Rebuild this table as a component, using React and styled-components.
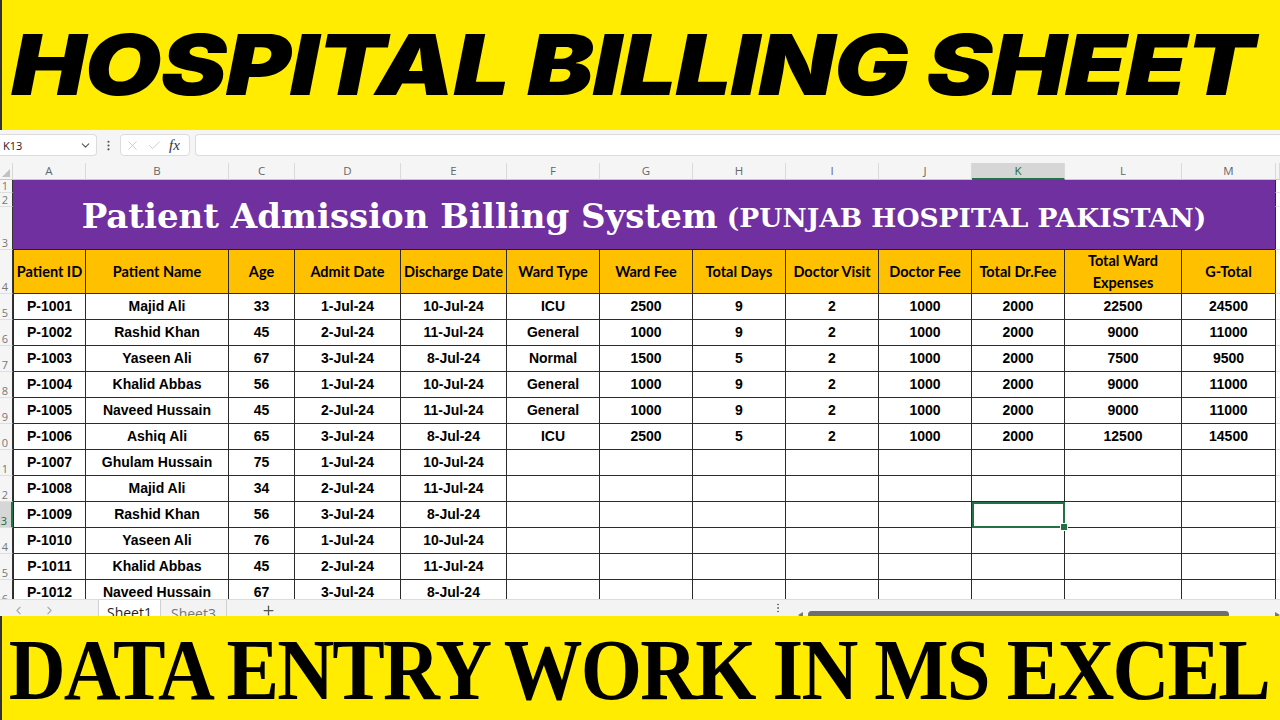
import React from "react"
import styled, { createGlobalStyle, css } from "styled-components"
import { ChevronDown, X, Check, EllipsisVertical, ChevronLeft, ChevronRight, Plus } from "lucide-react"

const GlobalStyle = createGlobalStyle`
  html, body { margin: 0; padding: 0; }
  body {
    width: 1280px; height: 720px; overflow: hidden;
    font-family: "Liberation Sans", Arial, sans-serif;
    background: #fff;
  }
`

const YELLOW = "#ffec00"
const GRID_COLS = "13px 73px 143px 66px 106px 106px repeat(6, 93px) 117px 94px 1fr"

const Page = styled.div`
  display: flex;
  flex-direction: column;
  width: 1280px;
  height: 720px;
`

const Banner = styled.div`
  background: ${YELLOW};
  height: ${p => p.$h}px;
  display: flex;
  align-items: center;
  justify-content: center;
  color: #000;
  overflow: hidden;
  white-space: nowrap;
  border-left: 2px solid #333;
`

const TopTitle = styled.h1`
  margin: 0 18px 0 0;
  font-family: Inter, "Liberation Sans", sans-serif;
  font-weight: 900;
  font-style: italic;
  font-size: 84px;
  letter-spacing: -1px;
  line-height: 1;
  transform: scaleX(1.185);
`

const BottomTitle = styled.h2`
  margin: 0 4px 0 0;
  font-family: "Liberation Serif", "Times New Roman", serif;
  font-weight: 700;
  font-size: 86px;
  letter-spacing: -2px;
  line-height: 1;
  transform: scaleX(0.916);
  padding-top: 4px;
`

const Excel = styled.div`
  height: 486px;
  display: flex;
  flex-direction: column;
  background: #f5f5f5;
  font-family: "Open Sans", "Liberation Sans", sans-serif;
`

const FormulaBar = styled.div`
  height: 28px;
  display: flex;
  align-items: center;
  gap: 5px;
  padding-top: 3px;
  box-sizing: border-box;
`

const Box = styled.div`
  height: 22px;
  box-sizing: border-box;
  background: #fff;
  border: 1px solid #dcdcdc;
  border-radius: 4px;
  display: flex;
  align-items: center;
  color: #222;
  font-size: 11px;
`

const NameBox = styled(Box)`
  width: 97px;
  padding: 0 4px 0 3px;
  justify-content: space-between;
  border-left: none;
  border-radius: 0 4px 4px 0;
`

const FxBox = styled(Box)`
  width: 70px;
  gap: 7px;
  padding-left: 4px;
  color: #c4c4c4;
`

const Fx = styled.span`
  font-family: "Liberation Serif", serif;
  font-style: italic;
  font-size: 15px;
  color: #333;
`

const Input = styled(Box)`
  flex: 1;
  border-right: none;
  border-radius: 4px 0 0 4px;
`

const Sheet = styled.div`
  margin-top: 5px;
  height: 437px;
  overflow: hidden;
  display: grid;
  grid-template-columns: ${GRID_COLS};
  grid-template-rows: 17px 13px 14px 43px 44px repeat(12, 26px);
  background: #fff;
`

const Corner = styled.div`
  background: #f5f5f5;
  border-right: 1px solid #d8d8d8;
  border-bottom: 1px solid #c8c8c8;
  position: relative;
  &::after {
    content: "";
    position: absolute;
    right: 2px; bottom: 2px;
    border-left: 8px solid transparent;
    border-bottom: 8px solid #c2c2c2;
  }
`

const ColHead = styled.div`
  background: ${p => (p.$active ? "#d6d6d6" : "#f5f5f5")};
  color: ${p => (p.$active ? "#1e6b41" : "#666")};
  font-size: 11.5px;
  display: flex;
  align-items: center;
  justify-content: center;
  border-right: 1px solid #dadada;
  border-bottom: ${p => (p.$active ? "2px solid #217346" : "1px solid #c8c8c8")};
  box-sizing: border-box;
`

const RowNum = styled.div`
  background: ${p => (p.$active ? "#d6d6d6" : "#f5f5f5")};
  color: ${p => (p.$active ? "#1e6b41" : "#777")};
  font-size: 11px;
  display: flex;
  align-items: flex-end;
  justify-content: flex-end;
  padding: 0 4px 1px 0;
  overflow: hidden;
  box-sizing: border-box;
  border-bottom: 1px solid #dedede;
  border-right: ${p => (p.$active ? "2px solid #217346" : "1px solid #333")};
  line-height: 1;
`

const TitleCell = styled.div`
  grid-column: 2 / span 13;
  grid-row: span 3;
  background: #7030a0;
  color: #fff;
  display: flex;
  align-items: center;
  justify-content: center;
  gap: 9px;
  font-family: "DejaVu Serif", "Liberation Serif", serif;
  font-weight: 700;
  border-bottom: 1px solid #222;
  border-right: 1px solid #222;
  padding-top: 3px;
  box-sizing: border-box;
  white-space: nowrap;
`

const TitleMain = styled.span`
  font-size: 34px;
`

const TitleSub = styled.span`
  font-size: 26.5px;
  padding-top: 4px;
`

const cellBase = css`
  border-right: 1px solid #2b2b2b;
  border-bottom: 1px solid #2b2b2b;
  box-sizing: border-box;
  display: flex;
  align-items: center;
  justify-content: center;
  text-align: center;
  color: #000;
`

const HeadCell = styled.div`
  ${cellBase}
  background: #ffc000;
  font-family: Lato, "Open Sans", sans-serif;
  font-weight: 700;
  font-size: 14.5px;
  line-height: 22px;
  padding-top: 2px;
  white-space: nowrap;
`

const DataCell = styled.div`
  ${cellBase}
  position: relative;
  background: #fff;
  font-family: "Liberation Sans", Arial, sans-serif;
  font-weight: 700;
  font-size: 14px;
  ${p => p.$selected && css`
    outline: 2px solid #217346;
    outline-offset: -2px;
  `}
`

const Handle = styled.span`
  position: absolute;
  right: -4px;
  bottom: -4px;
  width: 6px;
  height: 6px;
  background: #217346;
  border: 1px solid #fff;
  z-index: 2;
`

const Blank = styled.div`
  background: #fff;
  border-bottom: 1px solid #e1e1e1;
  border-left: 1px solid #2b2b2b;
  margin-left: -1px;
`

const TabBar = styled.div`
  height: 16px;
  overflow: hidden;
  display: flex;
  align-items: flex-start;
  background: #f3f3f3;
  border-top: 1px solid #dcdcdc;
  color: #888;
  font-size: 12px;
`

const Arrows = styled.div`
  width: 98px;
  display: flex;
  gap: 18px;
  padding: 4px 0 0 12px;
  box-sizing: border-box;
  color: #aaa;
`

const Tab = styled.div`
  padding: 3px 8px 0;
  height: 22px;
  color: ${p => (p.$active ? "#1e1e1e" : "#777")};
  background: ${p => (p.$active ? "#fff" : "transparent")};
  border-right: 1px solid #d0d0d0;
  font-size: 14px;
  ${p => p.$active && css`border-left: 1px solid #d0d0d0;`}
  ${p => !p.$active && css`padding: 4px 10px 0;`}
`

const AddTab = styled.div`
  padding: 3px 0 0 34px;
  color: #555;
`

const ScrollArea = styled.div`
  margin-left: auto;
  width: 508px;
  display: flex;
  align-items: flex-start;
  gap: 14px;
  padding-top: 2px;
  color: #666;
`

const Track = styled.div`
  flex: 1;
  display: flex;
  align-items: center;
  gap: 5px;
  padding-top: 9px;
`

const Tri = styled.span`
  width: 0; height: 0;
  border-top: 3px solid transparent;
  border-bottom: 3px solid transparent;
  ${p => (p.$dir === "left"
    ? css`border-right: 5px solid #777;`
    : css`border-left: 5px solid #777;`)}
`

const Thumb = styled.div`
  height: 7px;
  width: 421px;
  border-radius: 4px;
  background: #6f6f6f;
`

const columns = ["A", "B", "C", "D", "E", "F", "G", "H", "I", "J", "K", "L", "M", ""]

const headers = [
  "Patient ID", "Patient Name", "Age", "Admit Date", "Discharge Date", "Ward Type",
  "Ward Fee", "Total Days", "Doctor Visit", "Doctor Fee", "Total Dr.Fee",
  "Total Ward\nExpenses", "G-Total",
]

const rows = [
  ["P-1001", "Majid Ali", 33, "1-Jul-24", "10-Jul-24", "ICU", 2500, 9, 2, 1000, 2000, 22500, 24500],
  ["P-1002", "Rashid Khan", 45, "2-Jul-24", "11-Jul-24", "General", 1000, 9, 2, 1000, 2000, 9000, 11000],
  ["P-1003", "Yaseen Ali", 67, "3-Jul-24", "8-Jul-24", "Normal", 1500, 5, 2, 1000, 2000, 7500, 9500],
  ["P-1004", "Khalid Abbas", 56, "1-Jul-24", "10-Jul-24", "General", 1000, 9, 2, 1000, 2000, 9000, 11000],
  ["P-1005", "Naveed Hussain", 45, "2-Jul-24", "11-Jul-24", "General", 1000, 9, 2, 1000, 2000, 9000, 11000],
  ["P-1006", "Ashiq Ali", 65, "3-Jul-24", "8-Jul-24", "ICU", 2500, 5, 2, 1000, 2000, 12500, 14500],
  ["P-1007", "Ghulam Hussain", 75, "1-Jul-24", "10-Jul-24"],
  ["P-1008", "Majid Ali", 34, "2-Jul-24", "11-Jul-24"],
  ["P-1009", "Rashid Khan", 56, "3-Jul-24", "8-Jul-24"],
  ["P-1010", "Yaseen Ali", 76, "1-Jul-24", "10-Jul-24"],
  ["P-1011", "Khalid Abbas", 45, "2-Jul-24", "11-Jul-24"],
  ["P-1012", "Naveed Hussain", 67, "3-Jul-24", "8-Jul-24"],
]

const FirstCell = styled(DataCell)`
  border-left: 1px solid #2b2b2b;
`
const FirstHead = styled(HeadCell)`
  border-left: 1px solid #2b2b2b;
`

const App = () => (
  <Page>
    <GlobalStyle />
    <Banner $h={130}>
      <TopTitle>HOSPITAL BILLING SHEET</TopTitle>
    </Banner>

    <Excel>
      <FormulaBar>
        <NameBox>
          <span>K13</span>
          <ChevronDown size={13} color="#555" />
        </NameBox>
        <EllipsisVertical size={13} color="#555" />
        <FxBox>
          <X size={15} strokeWidth={1.3} />
          <Check size={15} strokeWidth={1.3} />
          <Fx>fx</Fx>
        </FxBox>
        <Input />
      </FormulaBar>

      <Sheet>
        <Corner />
        {columns.map((c, i) => (
          <ColHead key={i} $active={c === "K"}>{c}</ColHead>
        ))}

        <RowNum>1</RowNum>
        <TitleCell>
          <TitleMain>Patient Admission Billing System</TitleMain>
          <TitleSub>(PUNJAB HOSPITAL PAKISTAN)</TitleSub>
        </TitleCell>
        <Blank />
        <RowNum>2</RowNum>
        <Blank />
        <RowNum>3</RowNum>
        <Blank />

        <RowNum>4</RowNum>
        {headers.map((h, i) => {
          const Cell = i === 0 ? FirstHead : HeadCell
          return (
            <Cell key={h}>
              <span style={{ whiteSpace: "pre-line" }}>{h}</span>
            </Cell>
          )
        })}
        <Blank />

        {rows.map((r, ri) => {
          const rowNo = ri + 5
          return (
            <React.Fragment key={r[0]}>
              <RowNum $active={rowNo === 13}>{rowNo}</RowNum>
              {headers.map((_, ci) => {
                const Cell = ci === 0 ? FirstCell : DataCell
                const selected = rowNo === 13 && ci === 10
                return (
                  <Cell key={ci} $selected={selected}>
                    {r[ci] ?? ""}
                    {selected && <Handle />}
                  </Cell>
                )
              })}
              <Blank />
            </React.Fragment>
          )
        })}
      </Sheet>

      <TabBar>
        <Arrows>
          <ChevronLeft size={13} />
          <ChevronRight size={13} />
        </Arrows>
        <Tab $active>Sheet1</Tab>
        <Tab>Sheet3</Tab>
        <AddTab><Plus size={15} /></AddTab>
        <ScrollArea>
          <EllipsisVertical size={12} />
          <Track>
            <Tri $dir="left" />
            <Thumb />
            <span style={{ flex: 1 }} />
            <Tri $dir="right" />
          </Track>
        </ScrollArea>
      </TabBar>
    </Excel>

    <Banner $h={104}>
      <BottomTitle>DATA ENTRY WORK IN MS EXCEL</BottomTitle>
    </Banner>
  </Page>
)

export default App
